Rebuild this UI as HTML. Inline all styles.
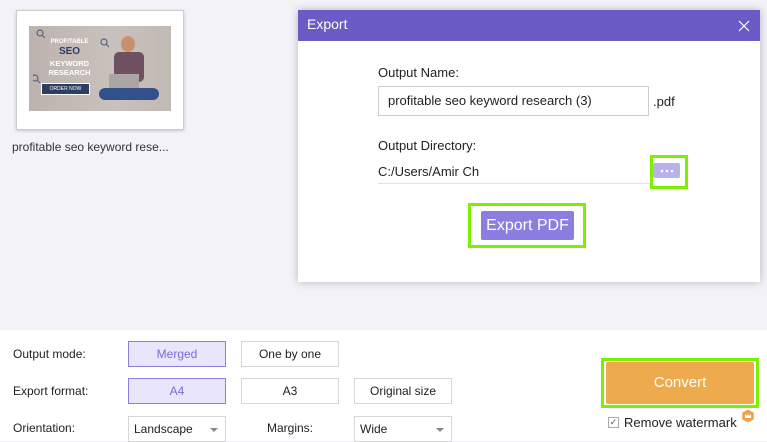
<!DOCTYPE html>
<html><head><meta charset="utf-8"><style>
*{box-sizing:border-box;margin:0;padding:0}
body{width:767px;height:441px;overflow:hidden;background:#f3f2f8;font-family:"Liberation Sans",sans-serif;color:#222;position:relative;font-size:12px}
.abs{position:absolute}
.btn{position:absolute;border:1px solid #d6d6d6;background:#fff;text-align:center;font-size:12px;line-height:24px;color:#222}
.sel{background:#e9e6fb;border-color:#8b7fe0;color:#7a6cd8}
.lbl{position:absolute;font-size:12px;color:#222}
.dd{position:absolute;border:1px solid #d6d6d6;background:#fff;font-size:12px;line-height:24px;padding-left:5px}
.dd:after{content:"";position:absolute;right:7px;top:11px;border:4px solid transparent;border-top:4px solid #888}
</style></head><body>
<div class="abs" style="left:16px;top:10px;width:168px;height:120px;background:#fff;border:1px solid #ccc;box-shadow:0 1px 3px rgba(0,0,0,.2)"></div>
<div class="abs" style="left:29px;top:26px;width:142px;height:85px;background:linear-gradient(90deg,#bdb3ae,#c9c1bc 60%,#c2b9b3);overflow:hidden">
  <div class="abs" style="left:13px;top:13px;width:55px;text-align:center;color:#fff;font-weight:bold;font-size:6px">PROFITABLE</div>
  <div class="abs" style="left:13px;top:20px;width:55px;text-align:center;color:#2c3e63;font-weight:bold;font-size:10px">SEO</div>
  <div class="abs" style="left:8px;top:33px;width:65px;text-align:center;color:#fff;font-weight:bold;font-size:7.5px;line-height:9px">KEYWORD<br>RESEARCH</div>
  <div class="abs" style="left:12px;top:57px;width:49px;height:12px;background:#2c3e63;border:1px solid #fff;color:#fff;font-size:5px;line-height:10px;text-align:center">ORDER NOW</div>
  <div class="abs" style="left:92px;top:10px;width:14px;height:16px;border-radius:50%;background:#c8906c"></div>
  <div class="abs" style="left:85px;top:26px;width:30px;height:30px;background:#6e5060;border-radius:5px"></div>
  <div class="abs" style="left:80px;top:48px;width:30px;height:20px;background:#aaa6a6"></div>
  <div class="abs" style="left:70px;top:62px;width:60px;height:12px;background:#33508a;border-radius:6px"></div>
  <svg class="abs" style="left:4px;top:2px" width="110" height="70"><g fill="none" stroke="#5a6580" stroke-width="1.2"><circle cx="7" cy="5" r="3"/><path d="M9 7l3 3"/><circle cx="71" cy="14" r="3"/><path d="M73 16l3 3"/><circle cx="2" cy="50" r="3"/><path d="M4 52l3 3"/></g></svg>
</div>
<div class="abs" style="left:12px;top:140px;font-size:12px;color:#333">profitable seo keyword rese...</div>
<div class="abs" style="left:298px;top:10px;width:462px;height:272px;background:#fff;box-shadow:0 0 8px rgba(0,0,0,.25)">
  <div class="abs" style="left:0;top:0;width:462px;height:31px;background:#6b5bc6;color:#fff;font-size:14px;line-height:29px;padding-left:9px">Export</div>
  <svg class="abs" style="left:440px;top:10px" width="12" height="12"><path d="M1 1L11 11M11 1L1 11" stroke="#fff" stroke-width="1.2"/></svg>
  <div class="lbl" style="left:80px;top:55px;font-size:13px">Output Name:</div>
  <div class="abs" style="left:80px;top:76px;width:271px;height:30px;border:1px solid #ccc;font-size:13px;line-height:28px;padding-left:9px">profitable seo keyword research (3)</div>
  <div class="lbl" style="left:355px;top:84px;font-size:13px">.pdf</div>
  <div class="lbl" style="left:80px;top:128px;font-size:13px">Output Directory:</div>
  <div class="lbl" style="left:80px;top:154px;font-size:13px">C:/Users/Amir Ch</div>
  <div class="abs" style="left:80px;top:173px;width:273px;height:1px;background:#e3e3e3"></div>
  <div class="abs" style="left:352px;top:145px;width:38px;height:34px;border:3px solid #7cf000"></div>
  <svg class="abs" style="left:355px;top:153px" width="28" height="16"><rect x="0" y="0" width="27" height="15" rx="2" fill="#b8b2ec"/><g fill="#fff"><circle cx="9" cy="8" r="1.3"/><circle cx="14" cy="8" r="1.3"/><circle cx="19" cy="8" r="1.3"/></g></svg>
  <div class="abs" style="left:170px;top:193px;width:118px;height:45px;border:3px solid #7cf000"></div>
  <div class="abs" style="left:183px;top:201px;width:93px;height:29px;background:#8c7de0;border-radius:2px;color:#fff;font-size:16px;line-height:29px;text-align:center">Export PDF</div>
</div>
<div class="abs" style="left:0;top:330px;width:767px;height:111px;background:#fff"></div>
<div class="lbl" style="left:13px;top:347px">Output mode:</div>
<div class="btn sel" style="left:128px;top:341px;width:98px;height:26px">Merged</div>
<div class="btn" style="left:241px;top:341px;width:98px;height:26px">One by one</div>
<div class="lbl" style="left:13px;top:384px">Export format:</div>
<div class="btn sel" style="left:128px;top:378px;width:98px;height:26px">A4</div>
<div class="btn" style="left:241px;top:378px;width:98px;height:26px">A3</div>
<div class="btn" style="left:354px;top:378px;width:98px;height:26px">Original size</div>
<div class="lbl" style="left:13px;top:421px">Orientation:</div>
<div class="dd" style="left:128px;top:416px;width:98px;height:26px">Landscape</div>
<div class="lbl" style="left:267px;top:421px">Margins:</div>
<div class="dd" style="left:354px;top:416px;width:98px;height:26px">Wide</div>
<div class="abs" style="left:601px;top:358px;width:158px;height:50px;border:3px solid #7cf000"></div>
<div class="abs" style="left:606px;top:362px;width:148px;height:42px;background:#eeab4e;border-radius:2px;color:#fff;font-size:15px;line-height:42px;text-align:center">Convert</div>
<div class="abs" style="left:608px;top:417px;width:11px;height:11px;border:1px solid #aaa;font-size:9px;line-height:9px;text-align:center;color:#555">✓</div>
<div class="lbl" style="left:624px;top:415px;font-size:13px">Remove watermark</div>
<svg class="abs" style="left:741px;top:409px" width="14" height="14"><path d="M7 0.5L12.8 3.8V10.2L7 13.5L1.2 10.2V3.8Z" fill="#eea24a"/><path d="M4 9L4.2 5L6 7L7 4.5L8 7L9.8 5L10 9Z" fill="#fff"/></svg>
</body></html>
